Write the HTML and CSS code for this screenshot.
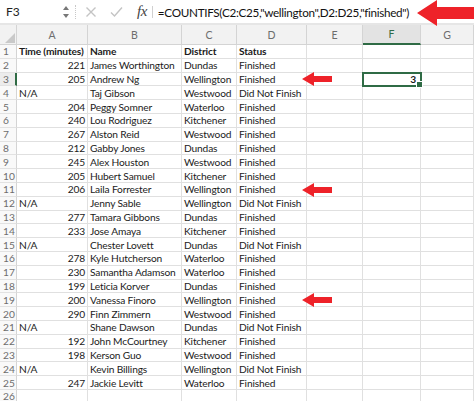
FILE: index.html
```
<!DOCTYPE html>
<html>
<head>
<meta charset="utf-8">
<link rel="stylesheet" href="styles.css">
</head>
<body>
<div class="app">
  <div class="fbar">
    <div class="namebox">F3</div>
    <svg class="spin" width="8" height="14" viewBox="0 0 8 14"><path d="M1 5 L4 1 L7 5 Z M1 9 L4 13 L7 9 Z" fill="#777"/></svg>
    <div class="sep"></div>
    <svg class="ico x" width="12" height="12" viewBox="0 0 12 12"><path d="M1.5 1.5 L10.5 10.5 M10.5 1.5 L1.5 10.5" stroke="#c4c4c4" stroke-width="1.4" fill="none"/></svg>
    <svg class="ico ok" width="13" height="12" viewBox="0 0 13 12"><path d="M1 6.5 L4.5 10 L12 1.5" stroke="#c4c4c4" stroke-width="1.4" fill="none"/></svg>
    <span class="fx">fx</span>
    <div class="sep2"></div>
    <div class="formula">=COUNTIFS(C2:C25,"wellington",D2:D25,"finished")</div>
  </div>
  <div class="band"></div>
  <div class="sheet">
    <div class="corner"><svg width="10" height="10" viewBox="0 0 10 10"><path d="M10 0 L10 10 L0 10 Z" fill="#c9c9c9"/></svg></div>
    <div class="ch">A</div><div class="ch">B</div><div class="ch">C</div><div class="ch">D</div><div class="ch">E</div><div class="ch sel">F</div><div class="ch">G</div>

    <div class="rh">1</div><div class="c b">Time (minutes)</div><div class="c b">Name</div><div class="c b">District</div><div class="c b">Status</div><div class="c"></div><div class="c"></div><div class="c"></div>
    <div class="rh">2</div><div class="c r">221</div><div class="c">James Worthington</div><div class="c">Dundas</div><div class="c">Finished</div><div class="c"></div><div class="c"></div><div class="c"></div>
    <div class="rh sel">3</div><div class="c r">205</div><div class="c">Andrew Ng</div><div class="c">Wellington</div><div class="c">Finished</div><div class="c"></div><div class="c r act">3<span class="handle"></span></div><div class="c"></div>
    <div class="rh">4</div><div class="c">N/A</div><div class="c">Taj Gibson</div><div class="c">Westwood</div><div class="c">Did Not Finish</div><div class="c"></div><div class="c"></div><div class="c"></div>
    <div class="rh">5</div><div class="c r">204</div><div class="c">Peggy Somner</div><div class="c">Waterloo</div><div class="c">Finished</div><div class="c"></div><div class="c"></div><div class="c"></div>
    <div class="rh">6</div><div class="c r">240</div><div class="c">Lou Rodriguez</div><div class="c">Kitchener</div><div class="c">Finished</div><div class="c"></div><div class="c"></div><div class="c"></div>
    <div class="rh">7</div><div class="c r">267</div><div class="c">Alston Reid</div><div class="c">Westwood</div><div class="c">Finished</div><div class="c"></div><div class="c"></div><div class="c"></div>
    <div class="rh">8</div><div class="c r">212</div><div class="c">Gabby Jones</div><div class="c">Dundas</div><div class="c">Finished</div><div class="c"></div><div class="c"></div><div class="c"></div>
    <div class="rh">9</div><div class="c r">245</div><div class="c">Alex Houston</div><div class="c">Westwood</div><div class="c">Finished</div><div class="c"></div><div class="c"></div><div class="c"></div>
    <div class="rh">10</div><div class="c r">205</div><div class="c">Hubert Samuel</div><div class="c">Kitchener</div><div class="c">Finished</div><div class="c"></div><div class="c"></div><div class="c"></div>
    <div class="rh">11</div><div class="c r">206</div><div class="c">Laila Forrester</div><div class="c">Wellington</div><div class="c">Finished</div><div class="c"></div><div class="c"></div><div class="c"></div>
    <div class="rh">12</div><div class="c">N/A</div><div class="c">Jenny Sable</div><div class="c">Wellington</div><div class="c">Did Not Finish</div><div class="c"></div><div class="c"></div><div class="c"></div>
    <div class="rh">13</div><div class="c r">277</div><div class="c">Tamara Gibbons</div><div class="c">Dundas</div><div class="c">Finished</div><div class="c"></div><div class="c"></div><div class="c"></div>
    <div class="rh">14</div><div class="c r">233</div><div class="c">Jose Amaya</div><div class="c">Kitchener</div><div class="c">Finished</div><div class="c"></div><div class="c"></div><div class="c"></div>
    <div class="rh">15</div><div class="c">N/A</div><div class="c">Chester Lovett</div><div class="c">Dundas</div><div class="c">Did Not Finish</div><div class="c"></div><div class="c"></div><div class="c"></div>
    <div class="rh">16</div><div class="c r">278</div><div class="c">Kyle Hutcherson</div><div class="c">Waterloo</div><div class="c">Finished</div><div class="c"></div><div class="c"></div><div class="c"></div>
    <div class="rh">17</div><div class="c r">230</div><div class="c">Samantha Adamson</div><div class="c">Waterloo</div><div class="c">Finished</div><div class="c"></div><div class="c"></div><div class="c"></div>
    <div class="rh">18</div><div class="c r">199</div><div class="c">Leticia Korver</div><div class="c">Dundas</div><div class="c">Finished</div><div class="c"></div><div class="c"></div><div class="c"></div>
    <div class="rh">19</div><div class="c r">200</div><div class="c">Vanessa Finoro</div><div class="c">Wellington</div><div class="c">Finished</div><div class="c"></div><div class="c"></div><div class="c"></div>
    <div class="rh">20</div><div class="c r">290</div><div class="c">Finn Zimmern</div><div class="c">Westwood</div><div class="c">Finished</div><div class="c"></div><div class="c"></div><div class="c"></div>
    <div class="rh">21</div><div class="c">N/A</div><div class="c">Shane Dawson</div><div class="c">Dundas</div><div class="c">Did Not Finish</div><div class="c"></div><div class="c"></div><div class="c"></div>
    <div class="rh">22</div><div class="c r">192</div><div class="c">John McCourtney</div><div class="c">Kitchener</div><div class="c">Finished</div><div class="c"></div><div class="c"></div><div class="c"></div>
    <div class="rh">23</div><div class="c r">198</div><div class="c">Kerson Guo</div><div class="c">Westwood</div><div class="c">Finished</div><div class="c"></div><div class="c"></div><div class="c"></div>
    <div class="rh">24</div><div class="c">N/A</div><div class="c">Kevin Billings</div><div class="c">Wellington</div><div class="c">Did Not Finish</div><div class="c"></div><div class="c"></div><div class="c"></div>
    <div class="rh">25</div><div class="c r">247</div><div class="c">Jackie Levitt</div><div class="c">Waterloo</div><div class="c">Finished</div><div class="c"></div><div class="c"></div><div class="c"></div>
    <div class="rh">26</div><div class="c"></div><div class="c"></div><div class="c"></div><div class="c"></div><div class="c"></div><div class="c"></div><div class="c"></div>
  </div>

  <svg class="bigarrow" width="58" height="26" viewBox="0 0 58 26"><path d="M0 13 L20 0 L20 7 L58 7 L58 19 L20 19 L20 26 Z" fill="#ee2229"/></svg>
  <svg class="arrow a3" width="30" height="14" viewBox="0 0 30 14"><path d="M0 7 L12 0 L12 4 L30 4 L30 10 L12 10 L12 14 Z" fill="#ee2229"/></svg>
  <svg class="arrow a11" width="30" height="14" viewBox="0 0 30 14"><path d="M0 7 L12 0 L12 4 L30 4 L30 10 L12 10 L12 14 Z" fill="#ee2229"/></svg>
  <svg class="arrow a19" width="30" height="14" viewBox="0 0 30 14"><path d="M0 7 L12 0 L12 4 L30 4 L30 10 L12 10 L12 14 Z" fill="#ee2229"/></svg>
</div>
</body>
</html>
```

FILE: styles.css
```
html, body {
  margin: 0;
  padding: 0;
  background: #fff;
}
.app {
  position: relative;
  width: 474px;
  height: 401px;
  overflow: hidden;
  font-family: Lato, "Liberation Sans", sans-serif;
  color: #1b1b1b;
}
.fbar {
  display: flex;
  align-items: center;
  height: 23px;
  background: #fff;
}
.namebox {
  width: 55px;
  padding-left: 6px;
  font-size: 12px;
  color: #222;
}
.spin {
  margin-left: 1px;
}
.sep {
  width: 0;
  height: 14px;
  border-left: 1px dotted #c8c8c8;
  margin-left: 5px;
}
.ico.x {
  margin-left: 9px;
}
.ico.ok {
  margin-left: 13px;
}
.fx {
  margin-left: 14px;
  font-family: "Liberation Serif", serif;
  font-style: italic;
  font-size: 15px;
  color: #444;
  letter-spacing: -0.5px;
}
.sep2 {
  width: 0;
  height: 12px;
  border-left: 1px solid #d0d0d0;
  margin-left: 5px;
}
.formula {
  margin-left: 5px;
  font-size: 11.7px;
  letter-spacing: -0.3px;
  color: #111;
  white-space: nowrap;
}
.band {
  height: 2px;
  background: #e6e6e6;
}
.sheet {
  display: grid;
  grid-template-columns: 17px 71px 94px 55px 70px 56px 58px 1fr;
  grid-template-rows: 20px repeat(26, 13.8px);
  font-size: 10.2px;
  letter-spacing: -0.15px;
}
.corner {
  background: #f2f2f2;
  border-right: 1px solid #d4d4d4;
  border-bottom: 1px solid #d4d4d4;
  display: flex;
  align-items: flex-end;
  justify-content: flex-end;
  padding: 0 1px 1px 0;
}
.ch {
  background: #f2f2f2;
  border-right: 1px solid #d4d4d4;
  border-bottom: 1px solid #d4d4d4;
  color: #6d6d6d;
  font-size: 10.5px;
  letter-spacing: 0;
  display: flex;
  align-items: center;
  justify-content: center;
}
.ch.sel {
  background: #e3e3e3;
  border-bottom: 2px solid #2f6b45;
  color: #2f6b45;
}
.rh {
  background: #f9f9f9;
  border-right: 1px solid #d4d4d4;
  border-bottom: 1px solid #e2e2e2;
  color: #6d6d6d;
  font-size: 10.2px;
  letter-spacing: 0;
  padding-left: 3px;
  display: flex;
  align-items: center;
  box-sizing: border-box;
}
.rh.sel {
  border-right: 2px solid #2f6b45;
  background: #ececec;
}
.c {
  border-right: 1px solid #e0e0e0;
  border-bottom: 1px solid #e0e0e0;
  padding: 0 2px;
  display: flex;
  align-items: center;
  white-space: nowrap;
  overflow: visible;
  min-width: 0;
}
.c.b {
  font-weight: bold;
}
.c.r {
  justify-content: flex-end;
}
.c.act {
  position: relative;
  outline: 2px solid #2f6b45;
  outline-offset: -1px;
  font-weight: bold;
  padding-right: 4px;
}
.handle {
  position: absolute;
  right: -3px;
  bottom: -3px;
  width: 5px;
  height: 5px;
  background: #2f6b45;
  border: 1px solid #fff;
}
.bigarrow {
  position: absolute;
  left: 417px;
  top: 0;
}
.arrow {
  position: absolute;
  left: 302px;
}
.a3 { top: 72px; }
.a11 { top: 183px; }
.a19 { top: 293px; }
```
